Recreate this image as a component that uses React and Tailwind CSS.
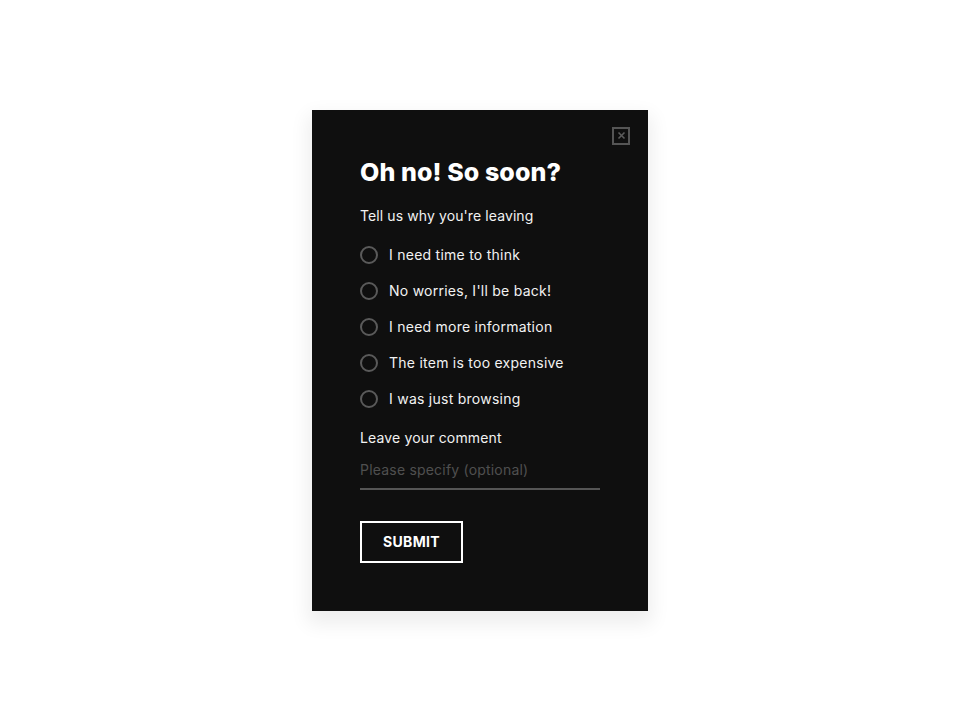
import React from "react";

const options = [
  "I need time to think",
  "No worries, I'll be back!",
  "I need more information",
  "The item is too expensive",
  "I was just browsing",
];

export default function App() {
  return (
    <div
      className="w-full h-[720px] bg-white flex items-center justify-center"
      style={{ fontFamily: "Inter, 'Noto Sans', sans-serif" }}
    >
      <div className="relative w-[336px] h-[501px] bg-[#0f0f0f] px-12 pt-[46px] pb-12 flex flex-col shadow-[0_9px_18px_4px_rgba(0,0,0,0.07)]">
        <button className="absolute top-[17px] right-[18px] w-[18px] h-[18px] border-2 border-[#555555] flex items-center justify-center">
          <svg width="9" height="9" viewBox="0 0 9 9" fill="none">
            <path d="M1.5 1.5L7.5 7.5M7.5 1.5L1.5 7.5" stroke="#5c5c5c" strokeWidth="1.6" />
          </svg>
        </button>
        <h1 className="text-[25px] leading-[32px] font-extrabold text-white tracking-[0.1px]">Oh no! So soon?</h1>
        <p className="mt-[18px] text-[14px] leading-[20px] text-[#f2f2f2] tracking-[0.1px]">Tell us why you're leaving</p>
        <div className="mt-[17px] flex flex-col gap-3">
          {options.map((o) => (
            <label key={o} className="flex items-center h-6 gap-[11px]">
              <span className="w-[18px] h-[18px] rounded-full border-2 border-[#5a5a5a] shrink-0" />
              <span className="text-[14px] leading-[20px] text-[#f2f2f2] tracking-[0.25px]">{o}</span>
            </label>
          ))}
        </div>
        <p className="mt-[17px] text-[14px] leading-[20px] text-[#f2f2f2] tracking-[0.15px]">Leave your comment</p>
        <div className="mt-1 h-[38px] border-b-2 border-[#555555] flex items-center">
          <span className="text-[14px] leading-[20px] text-[#4f4f4f] mt-[1px] tracking-[0.2px]">Please specify (optional)</span>
        </div>
        <button className="mt-[31px] w-[103px] h-[42px] border-2 border-white text-white text-[14px] font-bold tracking-[0.3px] flex items-center justify-center">
          SUBMIT
        </button>
      </div>
    </div>
  );
}
